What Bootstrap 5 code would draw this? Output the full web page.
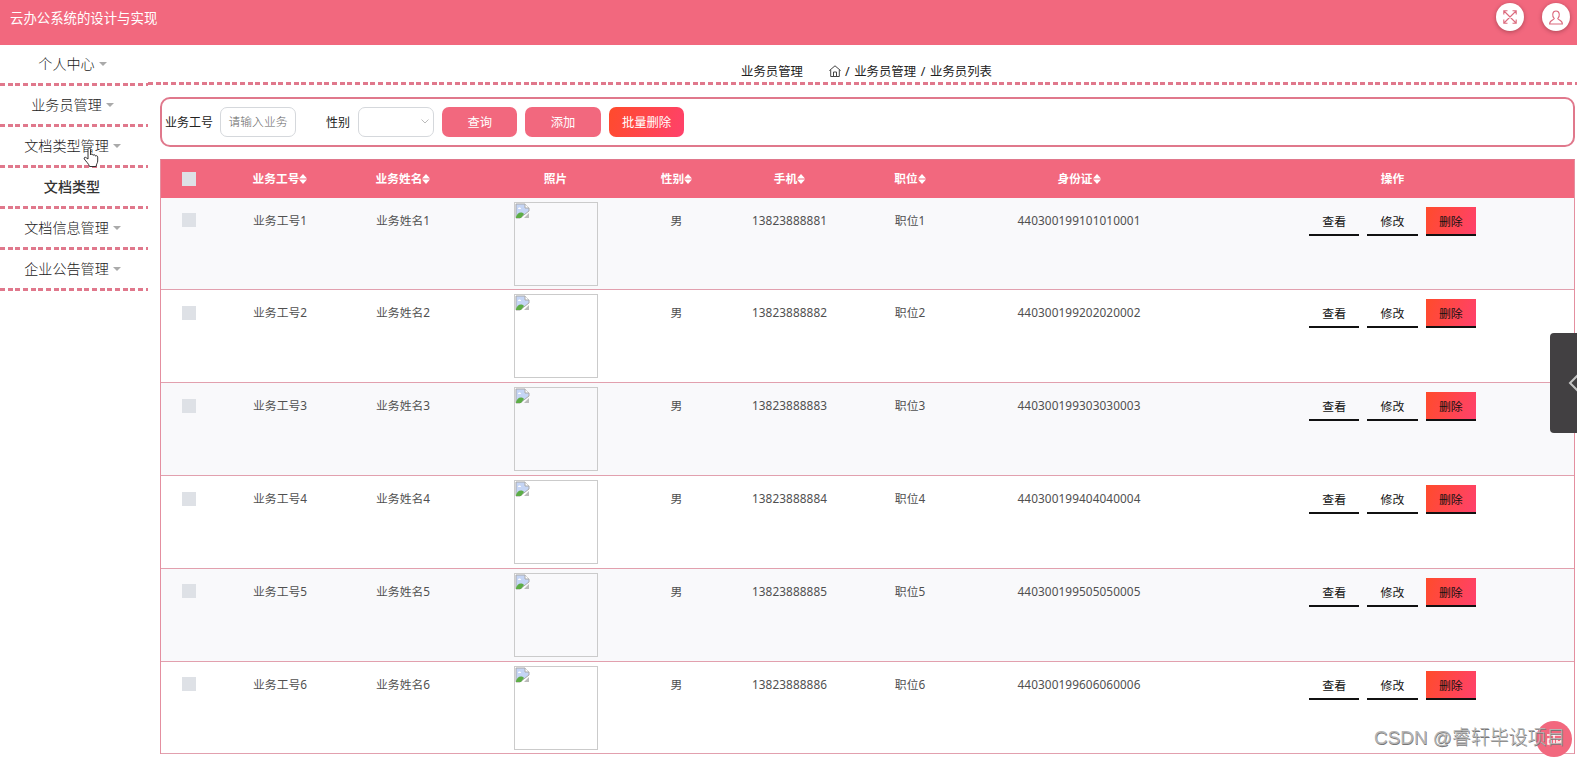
<!DOCTYPE html>
<html lang="zh-CN">
<head>
<meta charset="utf-8">
<title>云办公系统的设计与实现</title>
<link href="https://cdn.jsdelivr.net/npm/bootstrap@5.3.0/dist/css/bootstrap.min.css" rel="stylesheet">
<style>
:root{--pink:#f2687e;--line:#e0788c}
body{font-family:"Noto Sans","Noto Sans CJK SC",sans-serif;font-size:12px;line-height:1.5;color:#333;height:757px;overflow:hidden;background:#fff}
.topbar{height:44.6px;background:var(--pink);color:#fff}
.brand-text{font-size:13.4px;padding:8px 0 0 10px;line-height:20px;font-weight:400}
.tools{gap:18px;padding:3px 7px 0 0}
.round-btn{width:28px;height:28px;background:#fff;border-radius:50%;box-shadow:0 1px 4px rgba(90,30,40,.45)}
.side{width:148px;flex:none}
.dashed{height:3px;background:repeating-linear-gradient(90deg,var(--line) 0 5px,transparent 5px 7.67px)}
.side-item{height:38px;font-size:14.1px;font-weight:300;color:#222;padding-right:3px}
.side-item.active{font-weight:500;color:#333;padding-right:4px}
.caret{width:0;height:0;border:4px solid transparent;border-top-color:#aaa;border-bottom:0;margin-left:4px}
.crumbs{height:37.6px;padding-top:17px;padding-left:8px;color:#222;font-size:12.4px;word-spacing:1.4px}
.home-icon{margin:0 4px 2px 26px}
.filter{margin:11.8px 2px 0 12px;height:49.8px;border:2px solid var(--line);border-radius:10px;padding-left:3px;color:#222}
.filter>span{padding-top:2px}
.field{width:76px;height:30px;border:1px solid #d5d8dc;border-radius:7px;font-size:11.8px;color:#666;font-weight:300}
.field-id{margin:0 30px 0 7px}
.field-sex{margin:0 8px;padding-right:4px}
.act{width:75.4px;height:30px;border-radius:7px;background:var(--pink);color:#fff;font-size:12.3px;padding:1px 0 0;border:0;line-height:30px}
.hot{background:linear-gradient(110deg,#ff4b2b,#ff416c)}
.grid{width:1415px;margin:12.4px 0 0 12px;table-layout:fixed;border-collapse:separate;border-spacing:0;border:1px solid #e48fa0;border-top-color:var(--line);border-bottom:0}
.grid th{height:37.5px;background:var(--pink);color:#fff;text-align:center;padding:0;font-size:11.7px;font-weight:600}
.grid td{height:92.8px;padding:0;vertical-align:top;text-align:center;border-bottom:1px solid #e2a0ae;color:#505050;font-size:11.8px}
.grid tbody tr:nth-child(odd){background:#f9f9fb}
.cell{padding-top:13px;line-height:18px}
.num{letter-spacing:.09px}
.tick{width:14px;height:14px;background:#dee1e6;margin:0 auto;position:relative;left:-.6px}
td .tick{margin-top:15.5px}
.sorter{width:8px;height:10px;vertical-align:-1px}
.photo{width:84px;height:84px;border:1px solid #cbcbcb;margin:4px auto 0}
.ops{padding-top:9px}
.op{width:50.3px;height:29px;border:0;border-bottom:2px solid #111;border-radius:0;padding:0;color:#111;font-size:11.9px;line-height:28px}
.drawer{right:0;top:333px;width:27px;height:100px;background:#424042;border-radius:4px 0 0 4px}
.totop{width:36px;height:36px;left:1535.5px;top:721px;background:var(--pink)}
.wm{left:1374px;top:724px;font:300 18.9px/28px "Liberation Sans","Noto Sans CJK SC",sans-serif;color:#b4b4b4;text-shadow:.6px .6px 0 #777;white-space:nowrap}
.pointer{left:83px;top:147px}
</style>
</head>
<body class="position-relative">
<header class="topbar d-flex justify-content-between">
  <div class="brand-text">云办公系统的设计与实现</div>
  <div class="tools d-flex">
    <div class="round-btn d-flex align-items-center justify-content-center"><svg width="14" height="14" viewBox="0 0 14 14" fill="none" stroke="#dc6a7e" stroke-width="1.1"><path d="M1 1l12 12M13 1L1 13M.8 4.500V.8h3.700M9.500.8h3.700v3.700M13.200 9.500v3.700H9.500M4.500 13.200H.8V9.500"/></svg></div>
    <div class="round-btn d-flex align-items-center justify-content-center"><svg width="14" height="15" viewBox="0 0 14 15" fill="none" stroke="#dc6a7e" stroke-width="1.1"><path d="M5.300 8.600C2.900 6.500 3 1 7 1s4.100 5.500 1.700 7.600c0 1.400 4.700 1.200 4.700 5.400H.6c0-4.200 4.700-4 4.700-5.400z"/></svg></div>
  </div>
</header>
<div class="d-flex">
  <nav class="side">
    <div class="side-item d-flex align-items-center justify-content-center">个人中心<i class="caret"></i></div><div class="dashed"></div>
    <div class="side-item d-flex align-items-center justify-content-center">业务员管理<i class="caret"></i></div><div class="dashed"></div>
    <div class="side-item d-flex align-items-center justify-content-center">文档类型管理<i class="caret"></i></div><div class="dashed"></div>
    <div class="side-item active d-flex align-items-center justify-content-center">文档类型</div><div class="dashed"></div>
    <div class="side-item d-flex align-items-center justify-content-center">文档信息管理<i class="caret"></i></div><div class="dashed"></div>
    <div class="side-item d-flex align-items-center justify-content-center">企业公告管理<i class="caret"></i></div><div class="dashed"></div>
  </nav>
  <main class="flex-grow-1">
    <div class="crumbs d-flex justify-content-center align-items-center">
      <span>业务员管理</span>
      <svg class="home-icon" width="12" height="12" viewBox="0 0 12 12" fill="none" stroke="#444"><path d="M.4 5.600L6 .8l5.600 4.800M1.700 5v6.500h8.600V5M4.500 11.500V7h3v4.500"/></svg>
      <span>/ 业务员管理 / 业务员列表</span>
    </div>
    <div class="dashed"></div>
    <div class="filter d-flex align-items-center">
      <span>业务工号</span>
      <div class="field field-id d-flex align-items-center justify-content-center">请输入业务</div>
      <span>性别</span>
      <div class="field field-sex d-flex align-items-center justify-content-end"><svg width="8" height="5" fill="none" stroke="#bbb"><path d="M.5.5L4 4 7.500.5"/></svg></div>
      <div class="d-flex gap-2">
        <button class="btn act">查询</button>
        <button class="btn act">添加</button>
        <button class="btn act hot">批量删除</button>
      </div>
    </div>
    <table class="grid">
      <colgroup><col style="width:57px"><col style="width:124px"><col style="width:122px"><col style="width:183px"><col style="width:59px"><col style="width:167px"><col style="width:74px"><col style="width:264px"><col></colgroup>
      <thead><tr id="head"></tr></thead>
      <tbody id="rows"></tbody>
    </table>
  </main>
</div>
<div class="drawer position-absolute"><svg class="d-block" width="27" height="100" fill="none" stroke="#c4c4c4" stroke-width="2"><path d="M28 42l-8 8 8 8"/></svg></div>
<div class="totop position-absolute rounded-circle d-flex align-items-center justify-content-center"><svg width="16" height="12" fill="none" stroke="#fff" stroke-width="1.500"><path d="M1 2h14M8 2v9M2 6h3v5H2zM11 11V6h4v3h-3"/></svg></div>
<div class="wm position-absolute">CSDN @睿轩毕设项目</div>
<svg class="pointer position-absolute" width="17" height="21" viewBox="0 0 17 21" fill="#fff" stroke="#333"><path d="M5 12V2.500c0-2 2.500-2 2.500 0V8c.3-1.300 2.500-1.300 2.600.4.500-1.100 2.300-.8 2.400.7.700-.9 2.200-.4 2.200 1V14c0 2-1.500 3-1.500 5.500H6.500C6 17 3 14.500 1.300 12c-.8-1.500.9-2.300 2-1.200z"/></svg>
<script>
const sorter='<svg class="sorter" viewBox="0 0 8 10" fill="#fff"><path d="M4 0l4 4.500H0zM4 10L0 5.500h8z"/></svg>';
const heads=['业务工号','业务姓名','照片','性别','手机','职位','身份证','操作'];
document.getElementById('head').innerHTML='<th><div class="tick"></div></th>'+heads.map(h=>'<th>'+h+(h=='照片'||h=='操作'?'':sorter)+'</th>').join('');
const broken='<svg class="d-block" width="15" height="16" viewBox="0 0 15 16"><path d="M1 1h9l4 4v3l-9 7H1z" fill="#c5d5f5" stroke="#aaa"/><path d="M10 1v4h4" fill="#fff" stroke="#aaa"/><path d="M3 6c0-2 3-2 3 0z" fill="#fff"/><path d="M1 14c1-4 5-6 8-3l-3 4H1z" fill="#5dad46"/><path d="M9 15l5-5v5z" fill="#bbb"/></svg>';
const ids=['440300199101010001','440300199202020002','440300199303030003','440300199404040004','440300199505050005','440300199606060006'];
document.getElementById('rows').innerHTML=ids.map((id,k)=>{
  const i=k+1;
  const cell=(t,c='')=>'<td><div class="cell '+c+'">'+t+'</div></td>';
  return '<tr><td><div class="tick"></div></td>'+cell('业务工号'+i)+cell('业务姓名'+i)+
  '<td><div class="photo">'+broken+'</div></td>'+cell('男')+cell('1382388888'+i,'num')+cell('职位'+i)+cell(id,'num')+
  '<td><div class="ops d-flex justify-content-center gap-2"><button class="btn op">查看</button><button class="btn op">修改</button><button class="btn op hot">删除</button></div></td></tr>';
}).join('');
</script>
<script src="https://cdn.jsdelivr.net/npm/bootstrap@5.3.0/dist/js/bootstrap.bundle.min.js"></script>
</body>
</html>
